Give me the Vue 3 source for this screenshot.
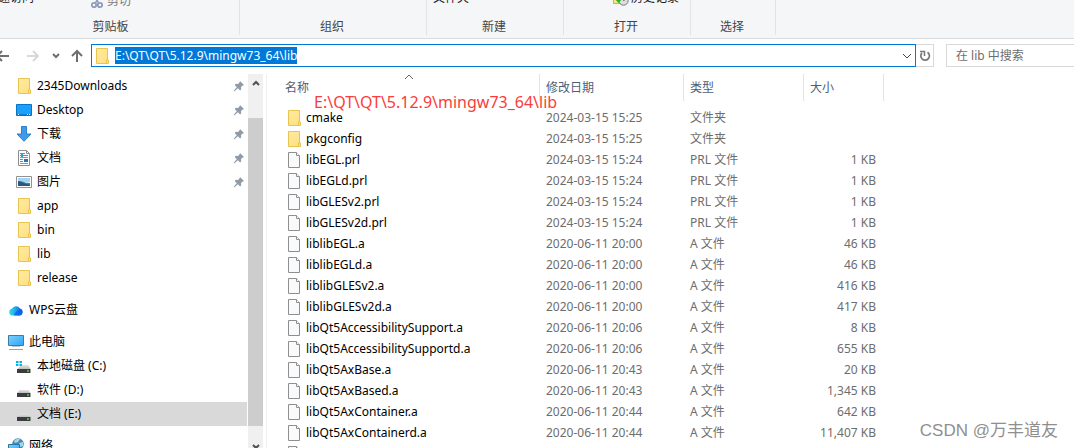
<script setup>
import { ref, onMounted } from 'vue'

const path = ref('E:\\QT\\QT\\5.12.9\\mingw73_64\\lib')
const query = ref('')
const address = ref(null)

onMounted(() => {
  address.value.focus()
  address.value.select()
})

const sections = [
  [
    { name: '2345Downloads', icon: 'folder', pinned: true, child: true },
    { name: 'Desktop', icon: 'desktop', pinned: true, child: true },
    { name: '下载', icon: 'download', pinned: true, child: true },
    { name: '文档', icon: 'document', pinned: true, child: true },
    { name: '图片', icon: 'picture', pinned: true, child: true },
    { name: 'app', icon: 'folder', child: true },
    { name: 'bin', icon: 'folder', child: true },
    { name: 'lib', icon: 'folder', child: true },
    { name: 'release', icon: 'folder', child: true },
  ],
  [{ name: 'WPS云盘', icon: 'cloud' }],
  [
    { name: '此电脑', icon: 'computer' },
    { name: '本地磁盘 (C:)', icon: 'system', child: true },
    { name: '软件 (D:)', icon: 'drive', child: true },
    { name: '文档 (E:)', icon: 'drive', child: true, active: true },
  ],
  [{ name: '网络', icon: 'network' }],
]

const files = [
  ['cmake', '2024-03-15 15:25', '文件夹', ''],
  ['pkgconfig', '2024-03-15 15:25', '文件夹', ''],
  ['libEGL.prl', '2024-03-15 15:24', 'PRL 文件', '1 KB'],
  ['libEGLd.prl', '2024-03-15 15:24', 'PRL 文件', '1 KB'],
  ['libGLESv2.prl', '2024-03-15 15:24', 'PRL 文件', '1 KB'],
  ['libGLESv2d.prl', '2024-03-15 15:24', 'PRL 文件', '1 KB'],
  ['liblibEGL.a', '2020-06-11 20:00', 'A 文件', '46 KB'],
  ['liblibEGLd.a', '2020-06-11 20:00', 'A 文件', '46 KB'],
  ['liblibGLESv2.a', '2020-06-11 20:00', 'A 文件', '416 KB'],
  ['liblibGLESv2d.a', '2020-06-11 20:00', 'A 文件', '417 KB'],
  ['libQt5AccessibilitySupport.a', '2020-06-11 20:06', 'A 文件', '8 KB'],
  ['libQt5AccessibilitySupportd.a', '2020-06-11 20:06', 'A 文件', '655 KB'],
  ['libQt5AxBase.a', '2020-06-11 20:43', 'A 文件', '20 KB'],
  ['libQt5AxBased.a', '2020-06-11 20:43', 'A 文件', '1,345 KB'],
  ['libQt5AxContainer.a', '2020-06-11 20:44', 'A 文件', '642 KB'],
  ['libQt5AxContainerd.a', '2020-06-11 20:44', 'A 文件', '11,407 KB'],
  ['', '', '', ''],
].map(([name, date, type, size]) => ({ name, date, type, size, folder: type === '文件夹' }))
</script>

<template>
  <div class="explorer">
    <svg class="defs" aria-hidden="true">
      <defs>
        <linearGradient id="gFolder" x1="0" y1="0" x2="1" y2="1">
          <stop offset="0" stop-color="#ffeaa6" /><stop offset="1" stop-color="#ffe07c" />
        </linearGradient>
        <linearGradient id="gScreen" x1="0" y1="0" x2="1" y2="1">
          <stop offset="0" stop-color="#7fd0ff" /><stop offset="1" stop-color="#2ba5f7" />
        </linearGradient>
        <linearGradient id="gCloud" x1="0" y1="0" x2="1" y2="0">
          <stop offset="0" stop-color="#35e0d0" /><stop offset="0.45" stop-color="#20a8f8" /><stop offset="1" stop-color="#0c50e0" />
        </linearGradient>
        <linearGradient id="gDrive" x1="0" y1="0" x2="0" y2="1">
          <stop offset="0" stop-color="#e4e4e6" /><stop offset="1" stop-color="#bdbdc1" />
        </linearGradient>
      </defs>
      <symbol id="i-folder" viewBox="0 0 16 16">
        <path d="M2.5.5h11v11.500h1v3.500h-12z" fill="url(#gFolder)" stroke="#e9c54e" />
        <path d="M12.500 15.500V12l1-1" fill="none" stroke="#e9c54e" />
      </symbol>
      <symbol id="i-file" viewBox="0 0 16 16">
        <path d="M2.500 .5h8l3 3v12h-11z" fill="#f9fafb" stroke="#8e8e8e" />
        <path d="M10.500 .5v3h3" fill="#fff" stroke="#8e8e8e" />
      </symbol>
      <symbol id="i-desktop" viewBox="0 0 16 16">
        <path d="M.5 2.500h15v11H.5z" fill="#1a9ffb" stroke="#0874c4" />
        <path d="M1 12h14v1H1z" fill="#0b80d6" />
        <path d="M2 12.500h1M11 12.500h1M13 12.500h1" stroke="#fff" />
      </symbol>
      <symbol id="i-download" viewBox="0 0 16 16">
        <path d="M5.500 .5h5V8H15l-7 7.300L1 8h4.500z" fill="#3f9be8" stroke="#2b7fd0" />
      </symbol>
      <symbol id="i-document" viewBox="0 0 16 16">
        <path d="M2.500 .5h8l3 3v12h-11z" fill="#fff" stroke="#8e8e8e" />
        <path d="M10.500 .5v3h3" fill="none" stroke="#8e8e8e" />
        <path d="M4 3.500h5M4 5.500h8M4 9.500h3M4 11.500h3" stroke="#3a9ad9" />
        <path d="M4 7.500h8M4 13.500h8" stroke="#8798a5" />
        <path d="M8 9h4v3H8z" fill="#2478b5" />
        <path d="M5 4h2v3H5z" fill="#2c9fe0" />
      </symbol>
      <symbol id="i-picture" viewBox="0 0 16 16">
        <path d="M.5 2.500h15v11H.5z" fill="#fff" stroke="#929292" />
        <path d="M2 4h12v4H2z" fill="#a4d4f5" />
        <path d="M2 8c3-2 5 1 12 1v3H2z" fill="#2f83ad" />
        <path d="M2 7c3 0 5 3 9 3l3 1v1H2z" fill="#29587b" />
      </symbol>
      <symbol id="i-cloud" viewBox="0 0 16 16">
        <path d="M4.500 13.500a3.400 3.400 0 0 1-.7-6.700A4.600 4.600 0 0 1 12 6.500a3.600 3.600 0 0 1-.5 7z" fill="url(#gCloud)" />
        <path d="M6 13.500c1-4 3.500-5.500 7.500-6a3.500 3.500 0 0 1-2 6z" fill="#0b62e4" opacity=".75" />
      </symbol>
      <symbol id="i-computer" viewBox="0 0 16 16">
        <path d="M.5 1.500h15v10H.5z" fill="url(#gScreen)" stroke="#3d7d9f" />
        <path d="M4 12.500h8" stroke="#b4c4ce" />
        <path d="M1 15.500h14" stroke="#8ea5b3" />
      </symbol>
      <symbol id="i-drive" viewBox="0 0 16 16">
        <path d="M3.500 8h9l2 3H1z" fill="url(#gDrive)" />
        <path d="M1 11h13.500v4H1z" fill="#3c3c3c" />
        <path d="M11 13h2" stroke="#35e14c" stroke-width="1.500" />
      </symbol>
      <symbol id="i-system" viewBox="0 0 16 16">
        <path d="M5 7h7.500l2 4H1.500z" fill="url(#gDrive)" />
        <path d="M1 11h13.500v4H1z" fill="#3c3c3c" />
        <path d="M11 13h2" stroke="#35e14c" stroke-width="1.500" />
        <path d="M0 3h2.500v2H0zM3.500 3H6v2H3.500zM0 6h2.500v2H0zM3.500 6H6v2H3.500z" fill="#00b3f0" />
      </symbol>
      <symbol id="i-network" viewBox="0 0 16 16">
        <circle cx="10" cy="6" r="5.800" fill="#3f8cb4" />
        <path d="M6 3c2-2 4-2.500 6-2l-2 3-3 1zM11 5l4-1v4l-3 1z" fill="#a8d6e4" />
        <path d="M.5 6.500h11v7H.5z" fill="url(#gScreen)" stroke="#2f7399" />
        <path d="M3 15.500h7" stroke="#8ea5b3" />
      </symbol>
      <symbol id="i-pin" viewBox="0 0 12 12">
        <path d="M7 1 11 5l-1.300.5-1.700 1.500.2 2.400-1.200 1-2.100-2.100L1.500 11.200l-.7-.7L3.800 7.200 1.700 5l1-1.200 2.400.2 1.500-1.700z" fill="#8f9ca8" />
      </symbol>
    </svg>

    <header class="ribbon">
      <section class="group clipboard">
        <div class="tools">
          <span class="tool quick">快速访问</span>
          <button class="tool cut" disabled>
            <svg width="12" height="16" viewBox="0 0 12 16" fill="none" stroke="#8d9dbd">
              <path d="M3 1 7.500 10M9 1 4.500 10" stroke-width="1.500" />
              <circle cx="3" cy="12" r="2.200" stroke-width="1.800" />
              <circle cx="9" cy="12" r="2.200" stroke-width="1.800" />
            </svg>
            剪切
          </button>
        </div>
        <h2>剪贴板</h2>
      </section>
      <section class="group organize"><h2>组织</h2></section>
      <section class="group create">
        <div class="tools"><button class="tool">文件夹</button></div>
        <h2>新建</h2>
      </section>
      <section class="group open">
        <div class="tools">
          <button class="tool history">
            <svg width="16" height="16" viewBox="0 0 16 16">
              <path d="M.5 2h8v11.500h-8z" fill="#ffe27c" stroke="#d9b13b" />
              <circle cx="10.500" cy="10.500" r="4.700" fill="#ddd" stroke="#777" />
              <path d="M10.500 7.500v3l2-1" fill="none" stroke="#666" />
              <path d="M4 6v3H2l3.500 4L9 9H7V6z" fill="#22b522" />
            </svg>
            历史记录
          </button>
        </div>
        <h2>打开</h2>
      </section>
      <section class="group choose"><h2>选择</h2></section>
    </header>

    <nav class="navbar">
      <div class="steps">
        <button class="back" aria-label="后退">
          <svg width="16" height="16" viewBox="0 0 16 16"><path d="M16 8H4M9 3 4 8l5 5" /></svg>
        </button>
        <button class="forward" aria-label="前进">
          <svg width="12" height="16" viewBox="0 0 12 16"><path d="M0 8h11M6 3l5 5-5 5" /></svg>
        </button>
        <button class="recent" aria-label="最近位置">
          <svg width="8" height="8" viewBox="0 0 8 8"><path d="m1 2 3 3 3-3" /></svg>
        </button>
        <button class="up" aria-label="上移">
          <svg width="12" height="16" viewBox="0 0 12 16"><path d="M6 14V3M1 8l5-5 5 5" /></svg>
        </button>
      </div>
      <div class="address">
        <svg width="16" height="16"><use href="#i-folder" /></svg>
        <input ref="address" v-model="path" aria-label="地址" spellcheck="false" />
        <button aria-label="展开">
          <svg width="10" height="8" viewBox="0 0 10 8"><path d="m1 2 4 4 4-4" fill="none" stroke="#444" /></svg>
        </button>
      </div>
      <button class="refresh" aria-label="刷新">
        <svg width="12" height="12" viewBox="0 0 12 12">
          <path d="M8.500 2.200A4.300 4.300 0 1 1 3 2.800" fill="none" stroke="#777" stroke-width="1.700" />
          <path d="M1 1.500h4.500V6" fill="none" stroke="#777" stroke-width="1.500" />
        </svg>
      </button>
      <input v-model="query" class="search" aria-label="搜索" placeholder="在 lib 中搜索" />
    </nav>

    <div class="body">
      <aside class="tree">
        <ul v-for="(section, s) in sections" :key="s">
          <li v-for="item in section" :key="item.name">
            <a href="#" :class="{ child: item.child, active: item.active }">
              <svg width="16" height="16"><use :href="`#i-${item.icon}`" /></svg>
              <span>{{ item.name }}</span>
              <svg v-if="item.pinned" class="pin" width="12" height="12"><use href="#i-pin" /></svg>
            </a>
          </li>
        </ul>
      </aside>
      <div class="scroll">
        <button aria-label="向上滚动">
          <svg width="8" height="8" viewBox="0 0 8 8"><path d="m1 6 3-3 3 3" /></svg>
        </button>
        <div class="track"><div class="thumb"></div></div>
        <button aria-label="向下滚动">
          <svg width="8" height="8" viewBox="0 0 8 8"><path d="m1 2 3 3 3-3" /></svg>
        </button>
      </div>

      <main class="files">
        <table>
          <colgroup>
            <col class="c-name" /><col class="c-date" /><col class="c-type" /><col class="c-size" />
          </colgroup>
          <thead>
            <tr>
              <th><div>名称</div></th>
              <th><div>修改日期</div></th>
              <th><div>类型</div></th>
              <th><div>大小</div></th>
            </tr>
          </thead>
          <tbody>
            <tr v-for="(f, i) in files" :key="i">
              <td>
                <div class="name">
                  <svg width="16" height="16"><use :href="f.folder ? '#i-folder' : '#i-file'" /></svg>
                  {{ f.name }}
                </div>
              </td>
              <td>{{ f.date }}</td>
              <td>{{ f.type }}</td>
              <td class="size">{{ f.size }}</td>
            </tr>
          </tbody>
        </table>
        <svg class="sort" width="10" height="6" viewBox="0 0 10 6"><path d="m1 5 4-4 4 4" fill="none" stroke="#666" /></svg>
        <p class="note">E:\QT\QT\5.12.9\mingw73_64\lib</p>
      </main>
    </div>
    <p class="watermark">CSDN @万丰道友</p>
  </div>
</template>

<style>
body {
  margin: 0;
  background: #fff;
}
</style>

<style scoped>
.explorer {
  position: relative;
  display: flex;
  flex-direction: column;
  height: 100vh;
  overflow: hidden;
  background: #fff;
  color: #000;
  font: 12px/16px "Noto Sans", "Noto Sans CJK SC", sans-serif;
}
.explorer * {
  box-sizing: border-box;
}
.defs {
  position: absolute;
  width: 0;
  height: 0;
}
button,
input {
  font: inherit;
  color: inherit;
  border: 0;
  padding: 0;
  background: none;
}
input {
  outline: 0;
}
svg {
  flex: none;
  display: block;
}

.ribbon {
  display: flex;
  flex: none;
  height: 39px;
  overflow: hidden;
  background: #f5f6f7;
  border-bottom: 1px solid #dadbdc;
}
.group {
  display: flex;
  flex-direction: column;
  justify-content: flex-end;
  margin-bottom: 3px;
  border-right: 1px solid #e2e3e4;
}
.group h2 {
  margin: 0;
  font-size: 12px;
  font-weight: 400;
  text-align: center;
  color: #444;
}
.clipboard {
  width: 240px;
}
.clipboard h2 {
  padding-right: 18px;
}
.organize {
  width: 187px;
}
.create {
  width: 137px;
}
.open {
  width: 127px;
}
.choose {
  width: 85px;
}
.organize h2,
.create h2,
.open h2,
.choose h2 {
  padding-right: 2px;
}
.tools {
  display: flex;
  align-items: flex-end;
  padding-bottom: 13px;
  color: #222;
}
.tool {
  display: flex;
  flex: none;
  align-items: center;
  gap: 4px;
}
.quick {
  margin-left: -14px;
}
.cut {
  margin: 0 0 -3px 57px;
  color: #7c7c7c;
}
.create .tool {
  margin-left: 6px;
}
.history {
  margin-left: 49px;
  gap: 2px;
}

.navbar {
  display: flex;
  flex: none;
  align-items: center;
  height: 35px;
  padding-bottom: 2px;
}
.steps {
  display: flex;
  align-items: center;
  width: 91px;
}
.steps svg,
.scroll svg {
  fill: none;
  stroke: #6f6f6f;
  stroke-width: 2;
}
.back {
  margin-left: -7px;
}
.forward {
  margin-left: 18px;
}
.forward svg {
  stroke: #d8d8d8;
}
.recent {
  margin-left: 13px;
}
.up {
  margin-left: 11px;
}
.address {
  display: flex;
  flex: 1;
  align-items: center;
  height: 23px;
  padding: 0 3px 0 2px;
  border: 1px solid #0078d7;
}
.address input {
  flex: 1;
  min-width: 0;
  height: 17px;
  margin-left: 5px;
  line-height: 17px;
}
.address input::selection {
  background: #0078d7;
  color: #fff;
}
.refresh {
  display: grid;
  place-items: center;
  width: 18px;
  height: 23px;
  border: 1px solid #d9d9d9;
  border-left: 0;
}
.search {
  width: 128px;
  height: 23px;
  margin-left: 12px;
  padding: 0 9px;
  border: 1px solid #d9d9d9;
  border-right: 0;
}
.search::placeholder {
  color: #6d6d6d;
  opacity: 1;
}

.body {
  display: flex;
  flex: 1;
  min-height: 0;
}
.tree {
  flex: none;
  width: 247px;
  overflow: hidden;
}
.tree ul {
  margin: 0 0 8px;
  padding: 0;
  list-style: none;
}
.tree a {
  display: flex;
  align-items: center;
  gap: 5px;
  height: 24px;
  padding: 0 2px 0 8px;
  color: inherit;
  text-decoration: none;
}
.tree a.child {
  padding-left: 16px;
}
.tree a.active {
  background: #d9d9d9;
}
.pin {
  margin-left: auto;
}
.scroll {
  display: flex;
  flex: none;
  flex-direction: column;
  width: 15px;
  margin: 0 0 -8px 1px;
  background: #f0f0f0;
}
.scroll button {
  display: grid;
  place-items: center;
  height: 18px;
}
.scroll svg {
  stroke: #505050;
}
.track {
  flex: 1;
  padding: 26px 0 12px;
}
.thumb {
  height: 100%;
  background: #cdcdcd;
}

.files {
  position: relative;
  flex: 1;
  min-width: 0;
  margin-left: 3px;
  border-left: 1px solid #f0f0f0;
  overflow: hidden;
}
table {
  table-layout: fixed;
  width: 617px;
  border-collapse: collapse;
}
.c-name {
  width: 273px;
}
.c-date {
  width: 144px;
}
.c-type {
  width: 120px;
}
.c-size {
  width: 80px;
}
th {
  height: 33px;
  padding: 0;
  vertical-align: top;
  font-weight: 400;
  text-align: left;
  color: #4c607a;
}
th div {
  height: 27px;
  padding-left: 6px;
  line-height: 27px;
  border-right: 1px solid #e3e3e3;
}
th:first-child div {
  padding-left: 18px;
}
td {
  height: 21px;
  padding: 0 0 0 6px;
  color: #6d6d6d;
  white-space: nowrap;
}
td:first-child {
  padding-left: 19px;
  color: #000;
}
.name {
  display: flex;
  align-items: center;
  gap: 4px;
}
td.size {
  padding-right: 8px;
  text-align: right;
}
.sort {
  position: absolute;
  top: 0;
  left: 137px;
}
.note {
  position: absolute;
  top: 16px;
  left: 47px;
  margin: 0;
  font-size: 16px;
  line-height: 24px;
  color: #fa3c3c;
}
.watermark {
  position: absolute;
  right: 16px;
  bottom: 5px;
  margin: 0;
  font-size: 17px;
  line-height: 24px;
  color: #8f8f8f;
  font-family: "Liberation Sans", "Noto Sans CJK SC", sans-serif;
}
</style>
